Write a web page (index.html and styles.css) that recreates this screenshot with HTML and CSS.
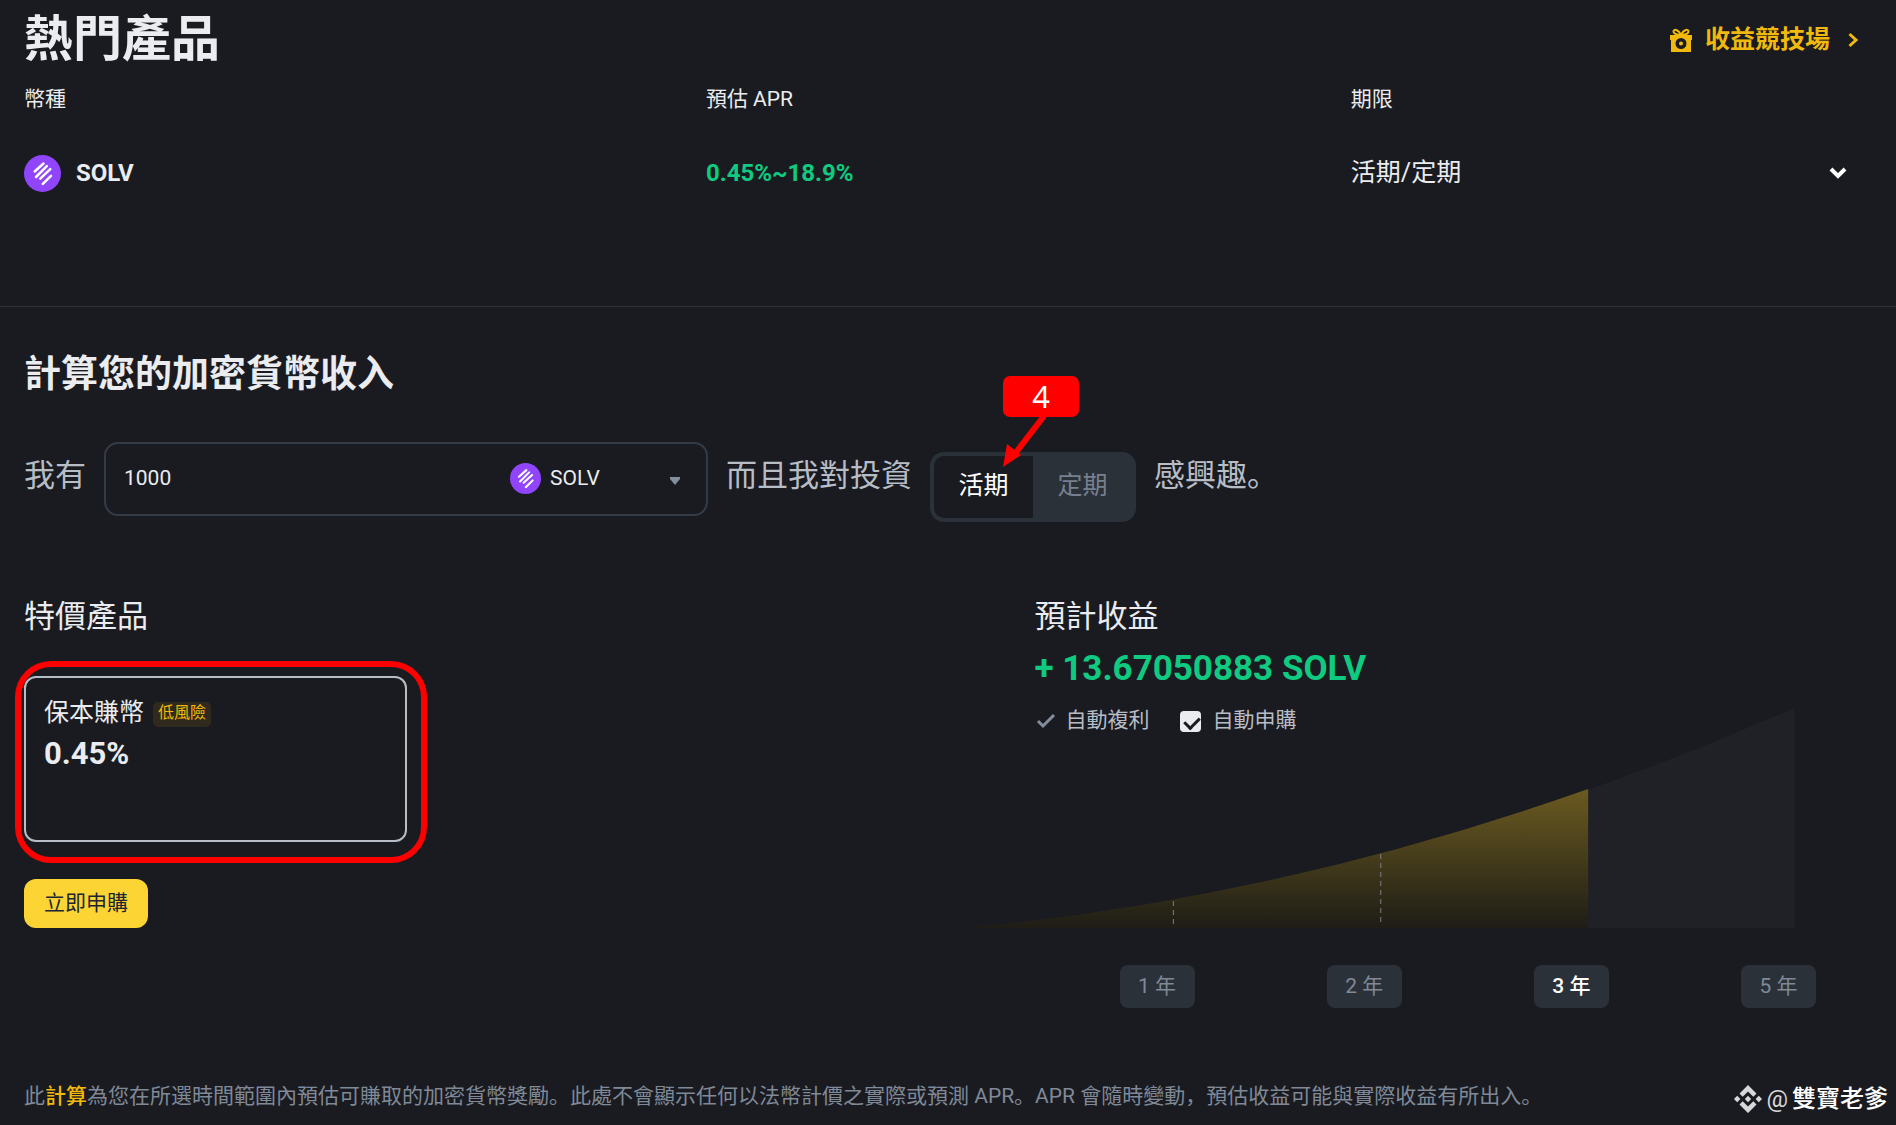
FILE: index.html
```html
<!DOCTYPE html>
<html lang="zh">

<head>
    <meta charset="UTF-8">
    <title>熱門產品</title>
    <link rel="stylesheet" href="styles.css">
</head>

<body>
    <!-- shared coin logo -->
    <svg class="symbols" width="0" height="0">
        <symbol id="solv" viewBox="0 0 37 37">
            <circle cx="18.500" cy="18.500" r="18.500" fill="#9045fc" />
            <path d="M10.700 16.500l8.800-8M12 22l10.800-10.800M16.300 23.600l10-9.400M18.800 28.800l8.200-8" fill="none" stroke="#fff" stroke-width="2.500" stroke-linecap="round" />
        </symbol>
    </svg>

    <section class="hot">
        <div class="hot-header">
            <h1>熱門產品</h1>
            <a href="#" class="arena-link">
                <svg width="22" height="24" viewBox="0 0 22 24">
                    <path d="M11 7C8 7 3.500 6 3.500 3.500S8 .8 11 7C14 .8 18.500 1 18.500 3.500S14 7 11 7z" fill="none" stroke="#f0b90b" stroke-width="2" />
                    <path fill="#f0b90b" fill-rule="evenodd" d="M0 7h22v5h-1v12H1V12H0zM11 10a5.500 5.500 0 1 0 0 11 5.500 5.500 0 0 0 0-11z" />
                    <circle cx="11" cy="15.500" r="2" fill="#f0b90b" />
                </svg>
                <span>收益競技場</span>
                <svg class="arrow" width="12" height="16" viewBox="0 0 12 16">
                    <path d="M2.500 2L9 8l-6.500 6" fill="none" stroke="#f0b90b" stroke-width="3" />
                </svg>
            </a>
        </div>
        <table class="hot-table">
            <thead>
                <tr>
                    <th class="col-coin">幣種</th>
                    <th class="col-apr">預估 APR</th>
                    <th>期限</th>
                </tr>
            </thead>
            <tbody>
                <tr>
                    <td>
                        <div class="coin">
                            <svg width="37" height="37"><use href="#solv" /></svg>
                            SOLV
                        </div>
                    </td>
                    <td class="apr">0.45%~18.9%</td>
                    <td>
                        <div class="term">
                            <span>活期/定期</span>
                            <button class="expand" aria-label="展開">
                                <svg width="18" height="14" viewBox="0 0 18 14">
                                    <path d="M2 3l7 7 7-7" fill="none" stroke="#fff" stroke-width="4" />
                                </svg>
                            </button>
                        </div>
                    </td>
                </tr>
            </tbody>
        </table>
    </section>

    <section class="calculator">
        <h2>計算您的加密貨幣收入</h2>

        <div class="sentence">
            <label for="amount">我有</label>
            <div class="amount-box">
                <input type="text" id="amount" value="1000">
                <svg width="31" height="31"><use href="#solv" /></svg>
                <select class="currency" aria-label="幣種">
                    <option>SOLV</option>
                </select>
                <svg class="caret" width="10" height="8" viewBox="0 0 10 8">
                    <path d="M0 0h10v2L5 8 0 2z" fill="#848e9c" />
                </svg>
            </div>
            <span>而且我對投資</span>
            <div class="toggle">
                <button class="active">活期</button>
                <button>定期</button>
                <div class="callout">4</div>
                <svg class="callout-arrow" width="44" height="52" viewBox="0 0 44 52">
                    <path d="M41 0L11 39" stroke="#f00" stroke-width="6" />
                    <path d="M0 51L4 28l14 11z" fill="#f00" />
                </svg>
            </div>
            <span>感興趣。</span>
        </div>

        <div class="columns">
            <div class="products">
                <h3>特價產品</h3>
                <div class="product">
                    <div class="product-name">保本賺幣 <span class="risk">低風險</span></div>
                    <div class="product-rate">0.45%</div>
                </div>
                <button class="subscribe">立即申購</button>
            </div>

            <div class="earnings">
                <div class="summary">
                    <h3>預計收益</h3>
                    <div class="total">+ 13.67050883 SOLV</div>
                    <div class="options">
                        <svg width="20" height="16" viewBox="0 0 20 16">
                            <path d="M2 8l5 5L18 2" fill="none" stroke="#848e9c" stroke-width="3" />
                        </svg>
                        <span class="compound">自動複利</span>
                        <input type="checkbox" id="auto" checked>
                        <label for="auto">自動申購</label>
                    </div>
                </div>
                <svg class="chart" viewBox="0 0 827 220" preserveAspectRatio="none">
                    <defs>
                        <linearGradient id="gold" x1="0" y1="0" x2="0" y2="1">
                            <stop offset="0" stop-color="#6b5a20" />
                            <stop offset="1" stop-color="#1e1d16" />
                        </linearGradient>
                    </defs>
                    <path d="M0 220Q413 182 827 0V220z" fill="#202126" />
                    <path d="M0 220Q310 191 621 81V220z" fill="url(#gold)" />
                    <path d="M207 193v25M414 146v72" stroke="#7c7f88" stroke-width="1" stroke-dasharray="5 4" />
                </svg>
                <div class="years">
                    <button>1 年</button>
                    <button>2 年</button>
                    <button class="active">3 年</button>
                    <button>5 年</button>
                </div>
            </div>
        </div>

        <p class="note">此<a href="#">計算</a>為您在所選時間範圍內預估可賺取的加密貨幣獎勵。此處不會顯示任何以法幣計價之實際或預測 APR。APR 會隨時變動，預估收益可能與實際收益有所出入。</p>
    </section>

    <div class="watermark">
        <svg width="28" height="28" viewBox="0 0 28 28">
            <g fill="#d6d7d9">
                <path d="M14 0l8.500 8.500-3.200 3.200L14 6.400l-5.300 5.300-3.200-3.200z" />
                <path d="M14 28l8.500-8.500-3.200-3.200-5.300 5.300-5.300-5.300-3.200 3.200z" />
                <path d="M14 10.800l3.200 3.200-3.200 3.200-3.200-3.200zM3.200 10.800L6.400 14l-3.200 3.200L0 14zM24.800 10.800L28 14l-3.200 3.200-3.200-3.200z" />
            </g>
        </svg>
        <span class="at">@</span>
        <span>雙寶老爹</span>
    </div>
</body>

</html>
```

FILE: styles.css
```css
* {
    box-sizing: border-box;
}

body {
    margin: 0;
    position: relative;
    background-color: #1a1b20;
    color: #eaecef;
    font-family: Roboto, "Noto Sans CJK SC", sans-serif;
    font-size: 21px;
}

h1, h2, h3, p {
    margin: 0;
}

button, input, select {
    font: inherit;
    color: inherit;
    background: none;
    border: none;
    padding: 0;
    margin: 0;
}

button {
    cursor: pointer;
}

a {
    color: #f0b90b;
    text-decoration: none;
}

svg {
    display: block;
    flex-shrink: 0;
}

.symbols {
    position: absolute;
}

/* hot products */
.hot {
    padding: 12px 24px 88px;
    border-bottom: 1px solid #2b3139;
}

.hot-header {
    display: flex;
    justify-content: space-between;
    height: 56px;
}

h1 {
    font-size: 49px;
    line-height: 56px;
}

.arena-link {
    display: flex;
    align-items: center;
    gap: 13px;
    height: 56px;
    padding-right: 13px;
    font-size: 25px;
    font-weight: 700;
    line-height: 48px;
}

.arena-link .arrow {
    margin-left: 4px;
}

.hot-table {
    width: 100%;
    border-collapse: collapse;
    table-layout: fixed;
    text-align: left;
}

.hot-table th {
    height: 60px;
    padding: 0 0 2px;
    font-weight: 400;
}

.hot-table td {
    height: 90px;
    padding: 0;
    font-size: 24px;
}

.col-coin {
    width: 36.9%;
}

.col-apr {
    width: 34.9%;
}

.coin {
    display: flex;
    align-items: center;
    gap: 15px;
    font-weight: 700;
}

.hot-table .apr {
    color: #0ecb81;
    font-weight: 700;
}

.term {
    display: flex;
    align-items: center;
    justify-content: space-between;
    padding-right: 25px;
    font-size: 25px;
}

.term span {
    padding-bottom: 6px;
}

/* calculator */
.calculator {
    padding: 43px 24px 13px;
}

h2 {
    font-size: 37px;
    line-height: 50px;
}

h3 {
    font-size: 31px;
    font-weight: 400;
    line-height: 46px;
}

.sentence {
    display: flex;
    align-items: flex-start;
    gap: 18px;
    margin-top: 42px;
    color: #b7bdc6;
    font-size: 31px;
    line-height: 68px;
}

.amount-box {
    display: flex;
    align-items: center;
    width: 604px;
    height: 74px;
    padding: 0 26px 2px 18px;
    border: 2px solid #333b47;
    border-radius: 14px;
    color: #eaecef;
    font-size: 21px;
    line-height: 30px;
}

.amount-box input {
    flex: 1;
    min-width: 0;
}

.currency {
    width: 112px;
    margin-left: 9px;
    appearance: none;
}

.caret {
    margin: 6px 0 0 8px;
}

.toggle {
    position: relative;
    display: flex;
    width: 206px;
    height: 70px;
    margin-top: 10px;
    padding: 4px;
    border-radius: 14px;
    background-color: #2b3139;
    color: #76808f;
    font-size: 25px;
}

.toggle button {
    flex: 1;
    padding-bottom: 2px;
    line-height: 60px;
}

.toggle .active {
    border-radius: 10px 0 0 10px;
    background-color: #1a1b20;
    color: #fff;
}

.callout {
    position: absolute;
    left: 73px;
    top: -76px;
    width: 76px;
    height: 41px;
    border-radius: 7px;
    background-color: #f00;
    color: #fff;
    font-family: "Noto Sans", sans-serif;
    font-size: 31px;
    line-height: 41px;
    text-align: center;
}

.callout-arrow {
    position: absolute;
    left: 73px;
    top: -36px;
}

.columns {
    display: grid;
    grid-template-columns: 51fr 49fr;
    margin-top: 72px;
}

.product {
    position: relative;
    width: 383px;
    height: 166px;
    margin-top: 36px;
    padding: 17px 18px;
    border: 2px solid #b7bdc6;
    border-radius: 12px;
}

/* red highlight round the card */
.product::after {
    content: "";
    position: absolute;
    inset: -17px -22px -23px -11px;
    border: 6px solid #f00;
    border-radius: 36px;
}

.product-name {
    display: flex;
    align-items: center;
    gap: 9px;
    font-size: 25px;
    line-height: 36px;
}

.risk {
    height: 25px;
    margin-top: 2px;
    padding: 0 5px;
    border-radius: 5px;
    background-color: #30291d;
    color: #f0b90b;
    font-size: 16px;
    line-height: 22px;
}

.product-rate {
    font-size: 31px;
    font-weight: 700;
    line-height: 46px;
}

.subscribe {
    height: 49px;
    margin-top: 37px;
    padding: 0 20px 5px;
    border-radius: 12px;
    background-color: #fcd535;
    color: #202630;
}

.summary {
    padding-left: 68px;
}

.total {
    margin-top: 4px;
    color: #0ecb81;
    font-size: 35px;
    font-weight: 700;
    line-height: 50px;
}

.options {
    display: flex;
    align-items: center;
    height: 32px;
    margin-top: 11px;
    padding-left: 2px;
    color: #b7bdc6;
    line-height: 32px;
}

.options span,
.options label {
    padding-bottom: 3px;
}

.compound {
    margin: 0 31px 0 9px;
}

.options input {
    position: relative;
    width: 21px;
    height: 21px;
    margin-right: 11px;
    border-radius: 4px;
    background-color: #eaecef;
    appearance: none;
}

.options input:checked::after {
    content: "";
    position: absolute;
    left: 7px;
    top: 3px;
    width: 7px;
    height: 12px;
    border: solid #1a1b20;
    border-width: 0 3px 3px 0;
    transform: rotate(45deg);
}

/* pulled up, the curve rises next to the options */
.chart {
    width: calc(100% - 77px);
    height: 220px;
    margin-top: -29px;
}

.years {
    display: grid;
    grid-template-columns: repeat(4, 1fr);
    justify-items: end;
    margin: 37px 56px 0 21px;
}

.years button {
    width: 75px;
    height: 43px;
    padding-bottom: 5px;
    border-radius: 8px;
    background-color: #2b3139;
    color: #7f8997;
}

.years .active {
    color: #fff;
    font-weight: 500;
}

.note {
    margin-top: 72px;
    color: #7f8997;
    line-height: 32px;
}

.note a {
    font-weight: 500;
}

.watermark {
    position: absolute;
    right: 8px;
    bottom: 8px;
    display: flex;
    align-items: center;
    gap: 4px;
    color: #fff;
    font-size: 24px;
    font-weight: 500;
    line-height: 36px;
}

.at {
    color: #d6d7d9;
    font-weight: 400;
}
```
